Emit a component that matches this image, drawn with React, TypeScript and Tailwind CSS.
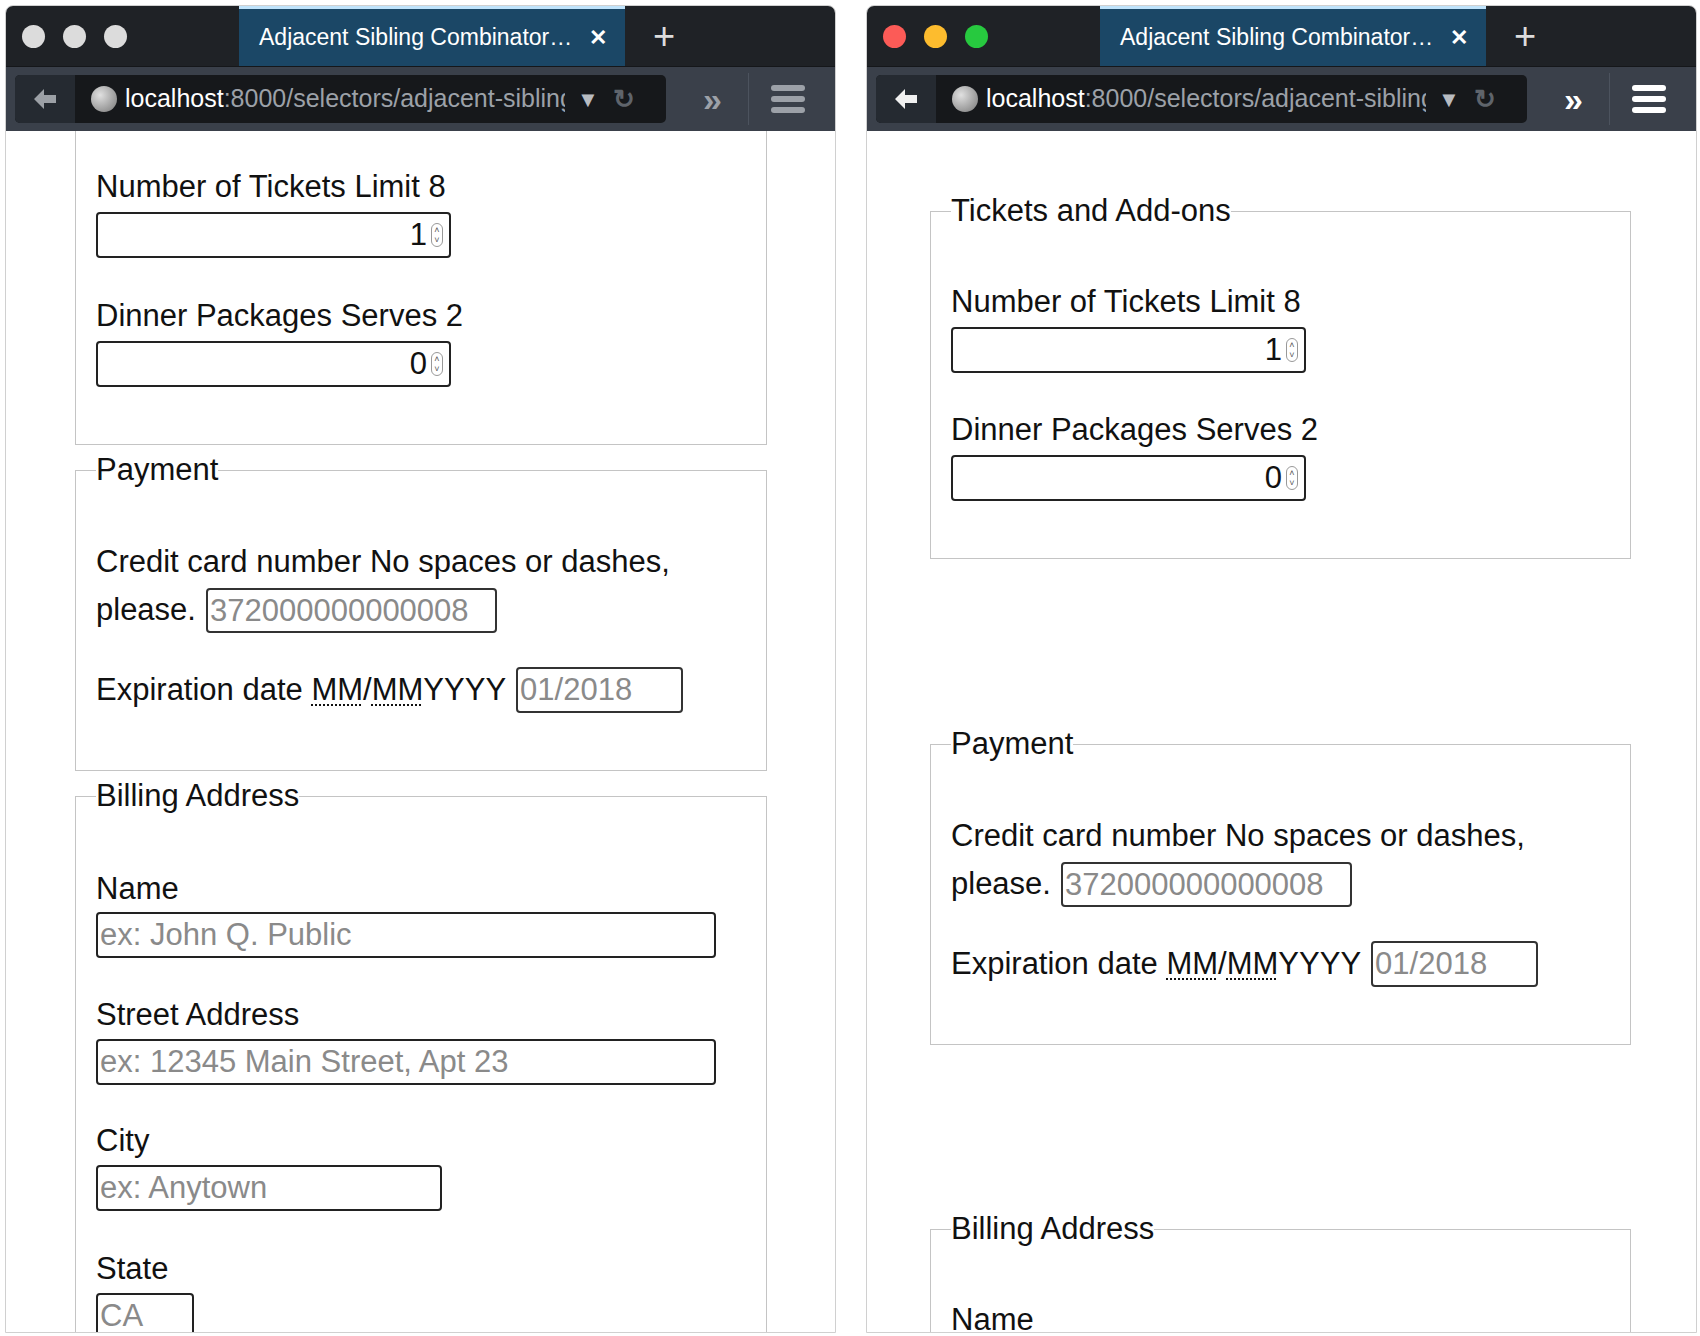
import React from "react";

const F = { fontFamily: '"Liberation Sans", Arial, sans-serif' };

function Chrome({ color }: { color: boolean }) {
  const dots = color ? ["bg-[#fc5b57]", "bg-[#fdbc2e]", "bg-[#27c93f]"] : ["bg-[#dcdcdc]", "bg-[#dcdcdc]", "bg-[#dcdcdc]"];
  return (
    <div>
      <div className="h-[60px] bg-[#1f2226] flex items-stretch relative">
        <div className="flex items-center gap-[18px] pl-[16px] w-[233px]">
          {dots.map((d, i) => (
            <div key={i} className={`w-[23px] h-[23px] rounded-full ${d}`} />
          ))}
        </div>
        <div className="w-[386px] bg-[#1b4766] border-t-[3px] border-[#bfe3fb] flex items-center pl-[20px] pr-[18px] text-white text-[23px] justify-between">
          <span>Adjacent Sibling Combinator…</span>
          <span className="text-[22px] font-bold">✕</span>
        </div>
        <div className="flex items-center pl-[28px] text-[#dcdcdc] text-[38px] font-light leading-none">+</div>
      </div>
      <div className="h-[65px] bg-[#3a404a] flex items-center border-t border-[#15171a]">
        <div className="ml-[9px] w-[651px] h-[48px] rounded-[5px] bg-[#16181b] flex items-center overflow-hidden">
          <div className="w-[60px] h-full bg-[#252a31] flex items-center justify-center shrink-0">
            <svg width="26" height="24" viewBox="0 0 26 24"><path d="M2 12 L12 2 L12 8 L24 8 L24 16 L12 16 L12 22 Z" fill={color ? "#f0f0f0" : "#9ca0a6"} /></svg>
          </div>
          <div className="ml-[16px] w-[26px] h-[26px] shrink-0 rounded-full bg-[radial-gradient(circle_at_35%_35%,#e0e0e0,#777)]" />
          <div className="ml-[8px] text-[25px] whitespace-nowrap overflow-hidden w-[440px] shrink-0">
            <span className="text-white">localhost</span>
            <span className="text-[#9ca1a8]">:8000/selectors/adjacent-sibling-combinator</span>
          </div>
          <span className="ml-[12px] shrink-0 text-[#b8bcc2] text-[22px]">▼</span>
          <span className="ml-[14px] shrink-0 text-[#5f646b] text-[26px] font-bold">↻</span>
        </div>
        <div className={`ml-[37px] text-[34px] font-bold ${color ? "text-white" : "text-[#9ca1a8]"}`}>»</div>
        <div className="ml-[26px] w-px h-[52px] bg-[#4c535e]" />
        <div className="ml-[22px] flex flex-col gap-[5px]">
          {[0, 1, 2].map((i) => (
            <div key={i} className={`w-[34px] h-[6px] rounded-full ${color ? "bg-white" : "bg-[#9ca1a8]"}`} />
          ))}
        </div>
      </div>
    </div>
  );
}

function NumInput({ v, mt }: { v: string; mt: string }) {
  return (
    <div className={`${mt} w-[355px] h-[46px] border-2 border-[#222] rounded-[4px] flex items-center justify-end pr-[6px] text-[31px] text-[#111]`}>
      <span>{v}</span>
      <span className="ml-[4px] w-[12px] h-[24px] border border-[#999] rounded-[6px] text-[9px] leading-[10px] text-[#555] flex flex-col items-center justify-center">
        <span>˄</span><span>˅</span>
      </span>
    </div>
  );
}

function TextInput({ ph, w, mt }: { ph: string; w: string; mt: string }) {
  return (
    <div className={`${mt} ${w} h-[46px] border-2 border-[#222] rounded-[4px] flex items-center pl-[2px] text-[31px] text-[#8a8a8a] whitespace-nowrap overflow-hidden`}>{ph}</div>
  );
}

function Legend({ t }: { t: string }) {
  return <span className="absolute left-[20px] -top-[18px] h-[34px] leading-[34px] bg-white text-[31px] text-[#111]">{t}</span>;
}

const Label = ({ t, mt }: { t: string; mt: string }) => <div className={`${mt} h-[34px] leading-[34px] text-[31px] text-[#111]`}>{t}</div>;

function Payment({ mt }: { mt: string }) {
  return (
    <div className={`${mt} relative border border-[#c4c4c4] pl-[20px] pb-[56px]`}>
      <Legend t="Payment" />
      <div className="mt-[67px] text-[31px] text-[#111] leading-[48px]">
        <div className="whitespace-nowrap">Credit card number No spaces or dashes,</div>
        <div className="flex items-center">
          please.
          <span className="ml-[10px] w-[291px] h-[45px] border-2 border-[#333] rounded-[4px] text-[#8a8a8a] leading-[41px] pl-[2px]">372000000000008</span>
        </div>
        <div className="mt-[32px] flex items-center whitespace-nowrap">
          Expiration date&nbsp;
          <span className="underline decoration-dotted decoration-2 underline-offset-4">MM</span>/
          <span className="underline decoration-dotted decoration-2 underline-offset-4">MM</span>
          <span>YYYY</span>
          <span className="ml-[10px] w-[167px] h-[46px] border-2 border-[#333] rounded-[4px] text-[#8a8a8a] leading-[42px] pl-[2px]">01/2018</span>
        </div>
      </div>
    </div>
  );
}

export default function App() {
  return (
    <div style={F} className="w-[1700px] h-[1336px] bg-white flex gap-[30px] pl-[5px] pt-[5px] overflow-hidden">
      <div className="w-[831px] h-[1328px] rounded-t-[8px] overflow-hidden border border-[#d0d0d0] flex flex-col">
        <Chrome color={false} />
        <div className="flex-1 overflow-hidden pl-[69px] pr-[68px]">
          <div className="border-x border-b border-[#c4c4c4] pl-[20px] pt-[39px] pb-[57px]">
            <Label t="Number of Tickets Limit 8" mt="mt-0" />
            <NumInput v="1" mt="mt-[8px]" />
            <Label t="Dinner Packages Serves 2" mt="mt-[41px]" />
            <NumInput v="0" mt="mt-[8px]" />
          </div>
          <Payment mt="mt-[25px]" />
          <div className="mt-[25px] relative border border-[#c4c4c4] pl-[20px] h-[700px]">
            <Legend t="Billing Address" />
            <Label t="Name" mt="mt-[75px]" />
            <TextInput ph="ex: John Q. Public" w="w-[620px]" mt="mt-[6px]" />
            <Label t="Street Address" mt="mt-[40px]" />
            <TextInput ph="ex: 12345 Main Street, Apt 23" w="w-[620px]" mt="mt-[7px]" />
            <Label t="City" mt="mt-[39px]" />
            <TextInput ph="ex: Anytown" w="w-[346px]" mt="mt-[7px]" />
            <Label t="State" mt="mt-[41px]" />
            <TextInput ph="CA" w="w-[98px]" mt="mt-[7px]" />
          </div>
        </div>
      </div>
      <div className="w-[831px] h-[1328px] rounded-t-[8px] overflow-hidden border border-[#d0d0d0] flex flex-col">
        <Chrome color={true} />
        <div className="flex-1 overflow-hidden pl-[63px] pr-[65px]">
          <div className="mt-[80px] relative border border-[#c4c4c4] pl-[20px] pb-[57px]">
            <Legend t="Tickets and Add-ons" />
            <Label t="Number of Tickets Limit 8" mt="mt-[73px]" />
            <NumInput v="1" mt="mt-[8px]" />
            <Label t="Dinner Packages Serves 2" mt="mt-[40px]" />
            <NumInput v="0" mt="mt-[8px]" />
          </div>
          <Payment mt="mt-[185px]" />
          <div className="mt-[184px] relative border border-[#c4c4c4] pl-[20px] h-[400px]">
            <Legend t="Billing Address" />
            <Label t="Name" mt="mt-[73px]" />
          </div>
        </div>
      </div>
    </div>
  );
}
